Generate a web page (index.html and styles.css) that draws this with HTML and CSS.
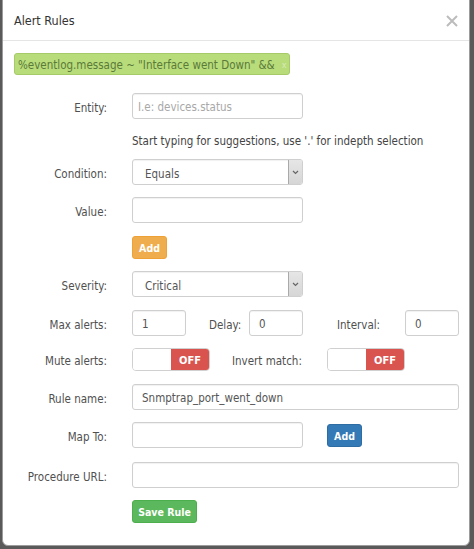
FILE: index.html
```html
<!DOCTYPE html>
<html>
<head>
<meta charset="utf-8">
<title>Alert Rules</title>
<link rel="stylesheet" href="styles.css">
</head>
<body>
<div class="modal">
  <div class="modal-header">
    <span class="title">Alert Rules</span>
    <svg class="close" width="12" height="12" viewBox="0 0 12 12"><path d="M1 1L11 11M11 1L1 11" stroke="#bcbcbc" stroke-width="2"/></svg>
  </div>
  <div class="modal-body">
    <div class="tags"><span class="tag">%eventlog.message ~ "Interface went Down" &amp;&amp;<span class="tag-x">x</span></span></div>
    <div class="form">
      <div class="row">
        <label class="lbl">Entity:</label>
        <input class="input half ph" placeholder="I.e: devices.status">
      </div>
      <div class="row help-row">
        <span class="lbl"></span>
        <span class="help">Start typing for suggestions, use '.' for indepth selection</span>
      </div>
      <div class="row">
        <label class="lbl">Condition:</label>
        <div class="select half"><span class="sel-text">Equals</span><span class="sel-arrow"><svg width="7" height="5" viewBox="0 0 7 5"><path d="M1 1L3.5 3.5L6 1" fill="none" stroke="#666" stroke-width="1.2"/></svg></span></div>
      </div>
      <div class="row">
        <label class="lbl">Value:</label>
        <input class="input half">
      </div>
      <div class="row mt1">
        <span class="lbl"></span>
        <button class="btn btn-warning">Add</button>
      </div>
      <div class="row">
        <label class="lbl">Severity:</label>
        <div class="select half"><span class="sel-text">Critical</span><span class="sel-arrow"><svg width="7" height="5" viewBox="0 0 7 5"><path d="M1 1L3.5 3.5L6 1" fill="none" stroke="#666" stroke-width="1.2"/></svg></span></div>
      </div>
      <div class="row mt1">
        <label class="lbl">Max alerts:</label>
        <div class="ctl-split">
          <div class="sub-left">
            <input class="input small" value="1">
            <label class="sub-lbl delay-lbl">Delay:</label>
            <input class="input small push" value="0">
          </div>
          <div class="sub-right">
            <label class="sub-lbl interval-lbl">Interval:</label>
            <input class="input small push" value="0">
          </div>
        </div>
      </div>
      <div class="row">
        <label class="lbl">Mute alerts:</label>
        <div class="ctl-split">
          <div class="sub-left">
            <div class="toggle"><span class="toggle-blank"></span><span class="toggle-off">OFF</span></div>
            <label class="sub-lbl invert-lbl">Invert match:</label>
          </div>
          <div class="sub-right">
            <div class="toggle"><span class="toggle-blank"></span><span class="toggle-off">OFF</span></div>
          </div>
        </div>
      </div>
      <div class="row mt1">
        <label class="lbl">Rule name:</label>
        <input class="input full" value="Snmptrap_port_went_down">
      </div>
      <div class="row">
        <label class="lbl">Map To:</label>
        <div class="ctl-split">
          <div class="sub-left"><input class="input half"></div>
          <div class="sub-right"><button class="btn btn-primary">Add</button></div>
        </div>
      </div>
      <div class="row mt2">
        <label class="lbl">Procedure URL:</label>
        <input class="input full">
      </div>
      <div class="row">
        <span class="lbl"></span>
        <button class="btn btn-success">Save Rule</button>
      </div>
    </div>
  </div>
</div>
</body>
</html>
```

FILE: styles.css
```css
html, body {
  margin: 0;
  padding: 0;
  background: #5a5a5a;
  height: 549px;
  overflow: hidden;
}

.modal {
  box-sizing: border-box;
  width: 468px;
  height: 552px;
  margin: -6px 0 0 2px;
  background: #fff;
  border: 1px solid #9c9c9c;
  border-radius: 6px;
  font-family: "DejaVu Sans Condensed", "DejaVu Sans", sans-serif;
  font-size: 11.5px;
  color: #555;
}

.modal-header {
  box-sizing: border-box;
  height: 46px;
  padding: 6px 11px 0 11px;
  border-bottom: 1px solid #e5e5e5;
  display: flex;
  align-items: center;
  justify-content: space-between;
}

.title {
  font-size: 12.5px;
  color: #333;
}

.close {
  display: block;
}

.modal-body {
  padding: 12px 10px 0 11px;
}

.tags {
  display: flex;
}

.tag {
  box-sizing: border-box;
  height: 22px;
  display: inline-flex;
  align-items: center;
  padding: 1px 3px 0 3px;
  background: #b9dc7b;
  border: 1px solid #a6ca68;
  border-radius: 3px;
  color: #5a7a38;
  font-size: 11.5px;
}

.tag-x {
  margin-left: 7px;
  color: #d6ebb4;
  font-size: 9px;
}

.form {
  margin-top: 18px;
  display: flex;
  flex-direction: column;
  gap: 12px;
}

.row {
  display: flex;
  align-items: center;
}

.mt1 { margin-top: 1px; }
.mt2 { margin-top: 2px; }

.lbl {
  flex: none;
  width: 93px;
  margin-right: 25px;
  padding-top: 3px;
  text-align: right;
  color: #505050;
}

.help-row {
  height: 16px;
}

.help {
  padding-top: 3px;
  color: #444;
}

.input {
  box-sizing: border-box;
  height: 26px;
  padding: 2px 9px 0 9px;
  border: 1px solid #cfcfcf;
  border-radius: 3px;
  background: #fff;
  box-shadow: inset 0 1px 1px rgba(0,0,0,0.06);
  font: inherit;
  color: #555;
  outline: none;
}

.input.ph {
  padding-left: 5px;
}

.input::placeholder {
  color: #a8a8a8;
}

.half {
  width: 171px;
}

.full {
  width: 327px;
}

.small {
  width: 54px;
}

.push {
  margin-left: auto;
}

.select {
  box-sizing: border-box;
  height: 26px;
  border: 1px solid #cfcfcf;
  border-radius: 3px;
  display: flex;
  align-items: stretch;
  box-shadow: inset 0 1px 1px rgba(0,0,0,0.06);
}

.sel-text {
  flex: 1;
  display: flex;
  align-items: center;
  padding: 3px 0 0 12px;
  color: #555;
}

.sel-arrow {
  width: 13px;
  display: flex;
  align-items: center;
  justify-content: center;
  background: linear-gradient(#e6e6e6, #d6d6d6);
  border-left: 1px solid #a9a9a9;
  border-radius: 0 2px 2px 0;
}

.ctl-split {
  display: flex;
  align-items: center;
}

.sub-left {
  width: 171px;
  margin-right: 24px;
  display: flex;
  align-items: center;
}

.sub-right {
  width: 132px;
  display: flex;
  align-items: center;
}

.sub-lbl {
  padding-top: 3px;
  color: #505050;
}

.delay-lbl {
  margin-left: 23px;
}

.interval-lbl {
  margin-left: 10px;
}

.invert-lbl {
  margin-left: 22px;
}

.toggle {
  box-sizing: border-box;
  width: 78px;
  height: 23px;
  border: 1px solid #d0d0d0;
  border-radius: 4px;
  display: flex;
  overflow: hidden;
}

.toggle-blank {
  flex: 1;
  background: #fff;
}

.toggle-off {
  width: 38px;
  display: flex;
  align-items: center;
  justify-content: center;
  padding-top: 1px;
  background: #d9534f;
  color: #fff;
  font-weight: bold;
  font-size: 11px;
}

.btn {
  box-sizing: border-box;
  height: 23px;
  padding: 1px 4px 0 4px;
  border: 1px solid transparent;
  border-radius: 3px;
  color: #fff;
  font: inherit;
  font-size: 10.5px;
  font-weight: bold;
  white-space: nowrap;
  cursor: pointer;
}

.btn-warning {
  background: #f0ad4e;
  border-color: #eea236;
  width: 35px;
}

.btn-primary {
  background: #337ab7;
  border-color: #2e6da4;
  width: 35px;
}

.btn-success {
  background: #5cb85c;
  border-color: #4cae4c;
  width: 65px;
}
```
